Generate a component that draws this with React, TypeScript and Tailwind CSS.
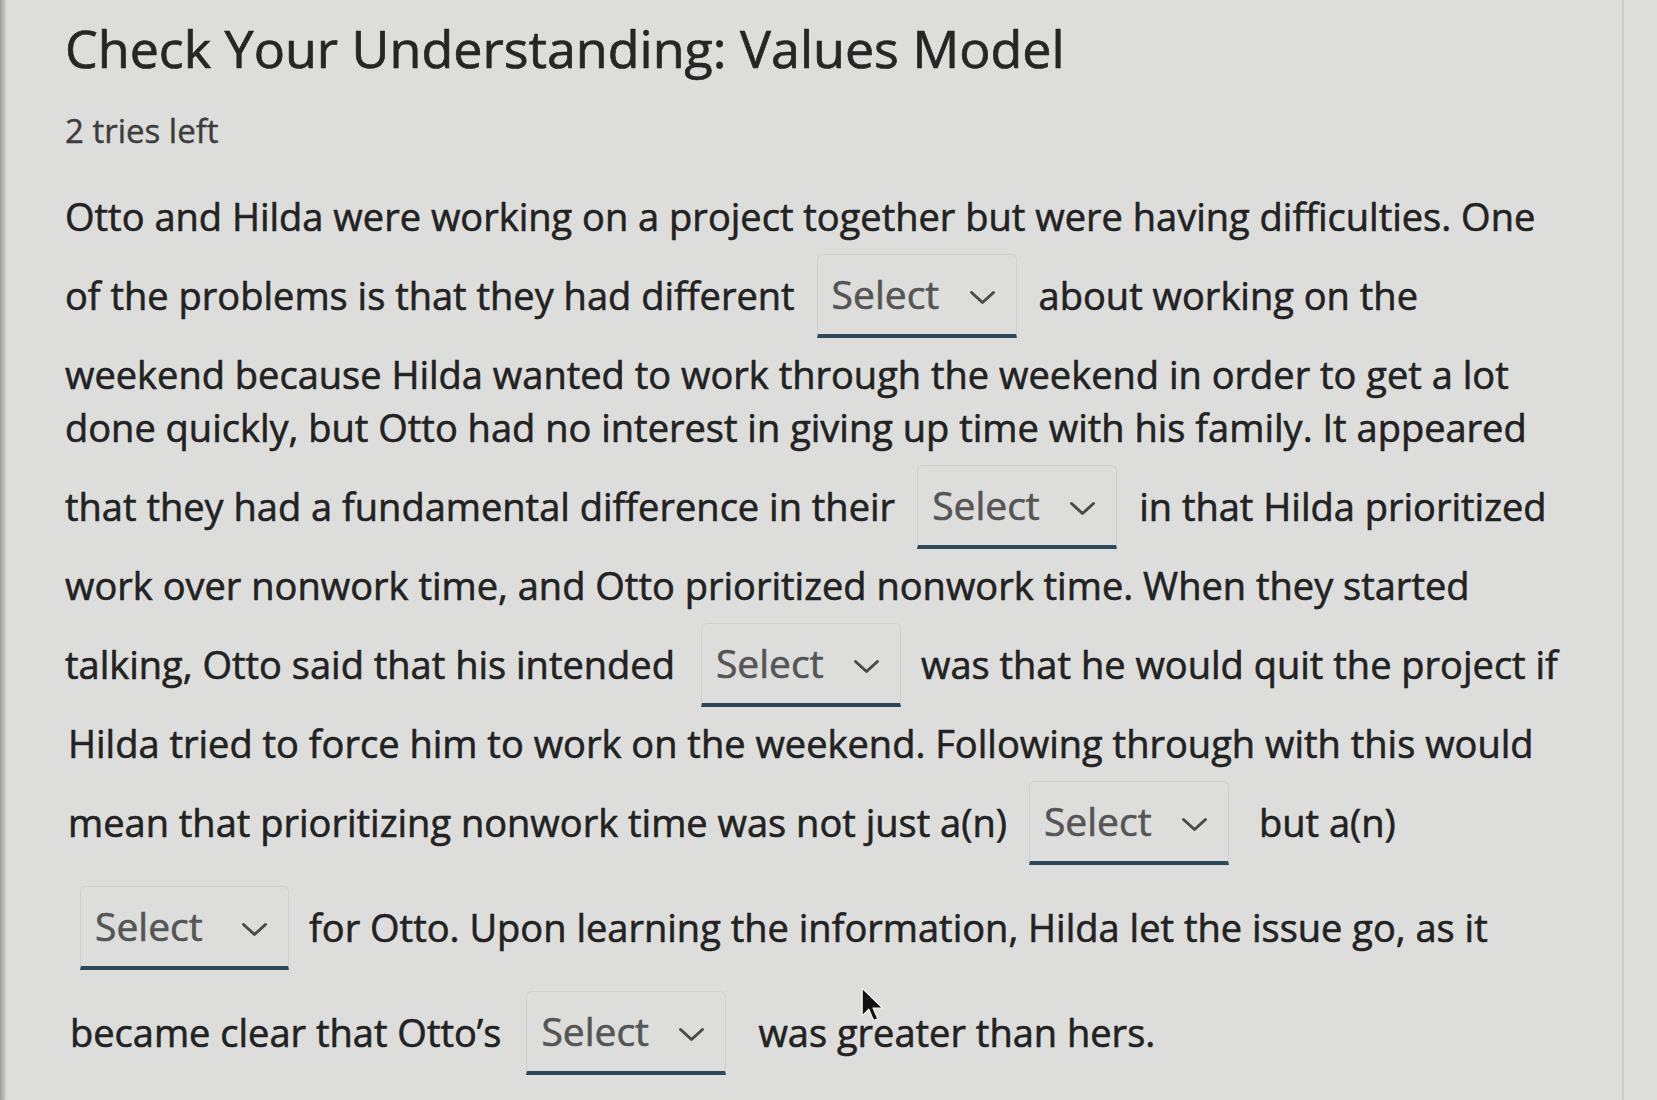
import React from "react";

// One fill-in-the-blank dropdown, closed, showing its placeholder.
function Blank({ className = "" }: { className?: string }) {
  return (
    <span
      className={`mx-[22px] inline-flex h-[84px] w-[200px] shrink-0 items-center justify-between rounded-t-[6px] border border-b-4 border-[#cfcfcd] border-b-[#2d4858] pl-[14px] pr-[20px] text-[39px] text-[#555] [-webkit-text-stroke:0.6px_#555] ${className}`}
    >
      <span>Select</span>
      <svg width="27" height="15" viewBox="0 0 27 15" fill="none" className="mt-[6px]">
        <polyline
          points="2.5,2.5 13.5,12.5 24.5,2.5"
          stroke="#4a4a4a"
          strokeWidth="3"
          strokeLinecap="round"
          strokeLinejoin="round"
        />
      </svg>
    </span>
  );
}

function Line({
  tall = false,
  className = "",
  children,
}: {
  tall?: boolean;
  className?: string;
  children: React.ReactNode;
}) {
  return (
    <div
      className={`flex items-center whitespace-pre ${tall ? "h-[105px]" : "h-[53px]"} ${className}`}
    >
      {children}
    </div>
  );
}

export default function App() {
  return (
    <div className="relative h-[1100px] w-full overflow-hidden bg-[#dddddb] font-['Open_Sans',sans-serif]">
      {/* edge of the screen bezel on the left, panel divider on the right */}
      <div className="absolute inset-y-0 left-0 w-[6px] bg-gradient-to-r from-[#9c9c9a] to-[#d2d2d0]" />
      <div className="absolute inset-y-0 left-[1622px] w-[2px] bg-[#c9c9c7]" />

      <main className="pl-[65px] pt-[16px]">
        <h1 className="text-[52px] leading-[64px] text-[#262626] [-webkit-text-stroke:0.7px_#262626]">
          Check Your Understanding: Values Model
        </h1>
        <p className="mt-[29px] text-[33px] leading-[44px] text-[#3c3c3c] [-webkit-text-stroke:0.4px_#3c3c3c]">
          2 tries left
        </p>

        <div className="mt-[37px] text-[38px] text-[#222] [-webkit-text-stroke:0.6px_#222]">
          <Line>
            Otto and Hilda were working on a project together but were having difficulties. One
          </Line>
          <Line tall>
            of the problems is that they had different
            <Blank />
            about working on the
          </Line>
          <Line>weekend because Hilda wanted to work through the weekend in order to get a lot</Line>
          <Line>done quickly, but Otto had no interest in giving up time with his family. It appeared</Line>
          <Line tall>
            that they had a fundamental difference in their
            <Blank />
            in that Hilda prioritized
          </Line>
          <Line>work over nonwork time, and Otto prioritized nonwork time. When they started</Line>
          <Line tall>
            talking, Otto said that his intended
            <Blank className="ml-[26px] mr-[20px]" />
            was that he would quit the project if
          </Line>
          <Line className="pl-[3px]">
            Hilda tried to force him to work on the weekend. Following through with this would
          </Line>
          <Line tall className="pl-[3px]">
            mean that prioritizing nonwork time was not just a(n)
            <Blank className="mr-[30px]" />
            but a(n)
          </Line>
          <Line tall>
            <Blank className="ml-[15px] mr-[20px] w-[209px]" />
            for Otto. Upon learning the information, Hilda let the issue go, as it
          </Line>
          <Line tall className="pl-[5px]">
            became clear that Otto’s
            <Blank className="ml-[25px] mr-[32px]" />
            was greater than hers.
          </Line>
        </div>
      </main>

      {/* mouse pointer resting over the last line */}
      <svg
        className="absolute left-[861px] top-[987px]"
        width="24"
        height="36"
        viewBox="0 0 20 30"
      >
        <path
          d="M1 1 L1 24 L6.5 18.5 L10.5 28 L14 26.5 L10 17.5 L18 17.5 Z"
          fill="#111"
          stroke="#f4f4f4"
          strokeWidth="1"
          strokeLinejoin="round"
        />
      </svg>
    </div>
  );
}
